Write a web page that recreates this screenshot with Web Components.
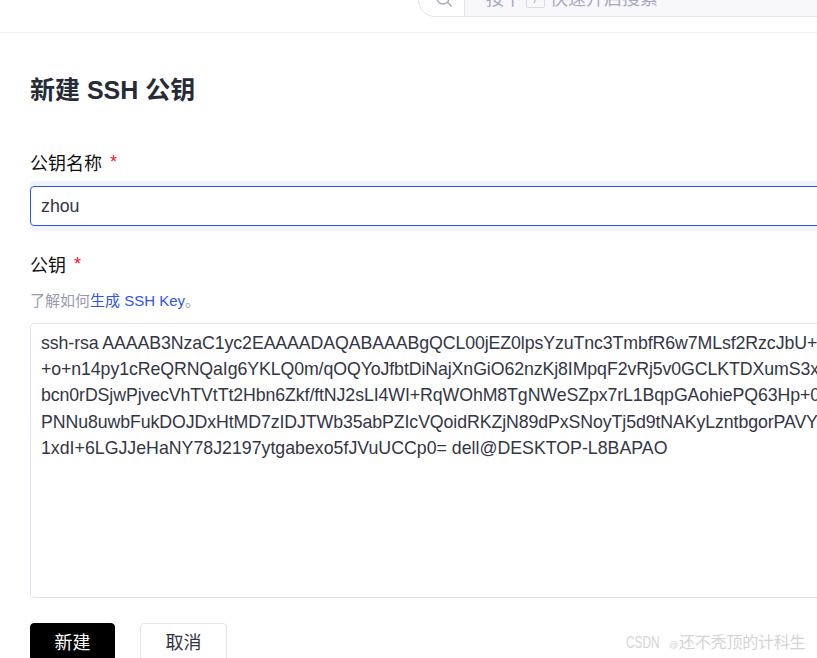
<!DOCTYPE html>
<html lang="zh">
<head>
<meta charset="utf-8">
<title>新建 SSH 公钥</title>
<style>
  html, body { margin: 0; height: 658px; overflow: hidden; background: #fff; }
  body { font-family: "Liberation Sans", "Noto Sans CJK SC", sans-serif; }
</style>
</head>
<body>
<top-bar></top-bar>
<key-form></key-form>
<water-mark></water-mark>

<script>
const barTemplate = document.createElement('template');
barTemplate.innerHTML = `
  <style>
    :host {
      display: flex;
      align-items: flex-end;
      height: 33px;
      box-sizing: border-box;
      padding: 0 0 15px 418px;
      border-bottom: 1px solid #f1f1f6;
      overflow: hidden;
    }
    .search {
      flex: none;
      display: flex;
      width: 500px;
      height: 44px;
      box-sizing: border-box;
      border: 1px solid #e3e3ee;
      border-radius: 17px 0 0 17px;
      overflow: hidden;
    }
    .icon {
      flex: none;
      width: 46px;
      display: flex;
      align-items: flex-end;
      padding: 0 0 8px 14px;
      box-sizing: border-box;
      border-right: 1px solid #e3e3ee;
    }
    .hint {
      flex: 1;
      display: flex;
      align-items: flex-end;
      padding: 0 0 8px 21px;
      background: #f8f8fb;
      color: #a8a8c0;
      font-size: 18px;
      line-height: 18px;
    }
    kbd {
      display: block;
      width: 19px;
      height: 18px;
      margin: 0 5px 0 4px;
      box-sizing: border-box;
      border: 1px solid #dcdce6;
      border-radius: 2px;
      font: 12px/16px "Liberation Sans", sans-serif;
      text-align: center;
    }
  </style>
  <div class="search">
    <div class="icon">
      <svg width="20" height="18" viewBox="0 0 20 18" fill="none" stroke="#a8a8b8" stroke-width="1.4">
        <circle cx="10" cy="8" r="6"/>
        <path d="M14.6 12.2 18.6 16.4"/>
      </svg>
    </div>
    <div class="hint"><span>按下</span><kbd>/</kbd><span>快速开启搜索</span></div>
  </div>
`;

class TopBar extends HTMLElement {
  constructor() {
    super();
    this.attachShadow({mode: 'open'}).appendChild(barTemplate.content.cloneNode(true));
  }
}

const formTemplate = document.createElement('template');
formTemplate.innerHTML = `
  <style>
    :host {
      display: block;
      width: 1000px;
      padding: 0 0 0 30px;
      box-sizing: border-box;
    }
    h1 {
      height: 34px;
      margin: 40px 0 0;
      font-size: 25px;
      line-height: 34px;
      font-weight: 700;
      color: #262b38;
    }
    label {
      display: flex;
      gap: 8px;
      height: 26px;
      font-size: 18px;
      line-height: 26px;
      color: #111;
    }
    label b {
      font-weight: 400;
      line-height: 22px;
      color: #f5141e;
    }
    .name-label { margin-top: 44px; }
    .name {
      margin-top: 9px;
      height: 40px;
      box-sizing: border-box;
      padding-left: 10px;
      border: 1px solid #2f54eb;
      border-radius: 4px;
      box-shadow: 0 -5px 0 #f0f3fc, 0 5px 0 #f0f3fc;
      font-size: 17.75px;
      line-height: 38px;
      color: #333645;
    }
    .key-label { margin-top: 27px; }
    .tip {
      height: 20px;
      margin: 12px 0 0;
      font-size: 15px;
      line-height: 20px;
      color: #9a9ab0;
    }
    .tip a { color: #2f54eb; text-decoration: none; }
    .key {
      margin-top: 12px;
      height: 275px;
      box-sizing: border-box;
      padding: 6px 10px;
      border: 1px solid #e3e3ee;
      border-radius: 4px;
      overflow: hidden;
      font-size: 17.75px;
      line-height: 26.2px;
      color: #333645;
      white-space: nowrap;
    }
    .long { letter-spacing: -0.1px; }
    .actions {
      display: flex;
      gap: 25px;
      margin-top: 25px;
    }
  </style>
  <h1>新建 SSH 公钥</h1>
  <label class="name-label"><span>公钥名称</span><b>*</b></label>
  <div class="name">zhou</div>
  <label class="key-label"><span>公钥</span><b>*</b></label>
  <p class="tip">了解如何<a href="#">生成 SSH Key</a>。</p>
  <div class="key">
    <div class="long">ssh-rsa AAAAB3NzaC1yc2EAAAADAQABAAABgQCL00jEZ0lpsYzuTnc3TmbfR6w7MLsf2RzcJbU+l</div>
    <div class="long">+o+n14py1cReQRNQaIg6YKLQ0m/qOQYoJfbtDiNajXnGiO62nzKj8IMpqF2vRj5v0GCLKTDXumS3xl</div>
    <div class="long">bcn0rDSjwPjvecVhTVtTt2Hbn6Zkf/ftNJ2sLI4WI+RqWOhM8TgNWeSZpx7rL1BqpGAohiePQ63Hp+0</div>
    <div class="long">PNNu8uwbFukDOJDxHtMD7zIDJTWb35abPZIcVQoidRKZjN89dPxSNoyTj5d9tNAKyLzntbgorPAVYW</div>
    <div>1xdI+6LGJJeHaNY78J2197ytgabexo5fJVuUCCp0= dell@DESKTOP-L8BAPAO</div>
  </div>
  <div class="actions">
    <form-button primary>新建</form-button>
    <form-button>取消</form-button>
  </div>
`;

class KeyForm extends HTMLElement {
  constructor() {
    super();
    this.attachShadow({mode: 'open'}).appendChild(formTemplate.content.cloneNode(true));
  }
}

const buttonTemplate = document.createElement('template');
buttonTemplate.innerHTML = `
  <style>
    :host {
      display: block;
      width: 87px;
      height: 40px;
      box-sizing: border-box;
      border: 1px solid #e3e3ee;
      border-radius: 4px;
      background: #fff;
      color: #303346;
      font-size: 18px;
      line-height: 38px;
      text-align: center;
    }
    :host([primary]) {
      width: 85px;
      border-color: #000;
      background: #000;
      color: #fff;
    }
  </style>
  <slot></slot>
`;

class FormButton extends HTMLElement {
  constructor() {
    super();
    this.attachShadow({mode: 'open'}).appendChild(buttonTemplate.content.cloneNode(true));
  }
}

const markTemplate = document.createElement('template');
markTemplate.innerHTML = `
  <style>
    :host {
      position: absolute;
      top: 632px;
      left: 626px;
      display: flex;
      align-items: baseline;
      font-size: 16px;
      line-height: 22px;
      color: #d4d4d4;
      white-space: nowrap;
    }
    .brand {
      width: 43px;
      transform: scaleX(0.74);
      transform-origin: left;
    }
    .at { width: 10px; font-size: 9px; }
    .name { letter-spacing: -0.2px; }
  </style>
  <span class="brand">CSDN</span><span class="at">@</span><span class="name">还不秃顶的计科生</span>
`;

class WaterMark extends HTMLElement {
  constructor() {
    super();
    this.attachShadow({mode: 'open'}).appendChild(markTemplate.content.cloneNode(true));
  }
}

customElements.define('top-bar', TopBar);
customElements.define('form-button', FormButton);
customElements.define('key-form', KeyForm);
customElements.define('water-mark', WaterMark);
</script>
</body>
</html>
